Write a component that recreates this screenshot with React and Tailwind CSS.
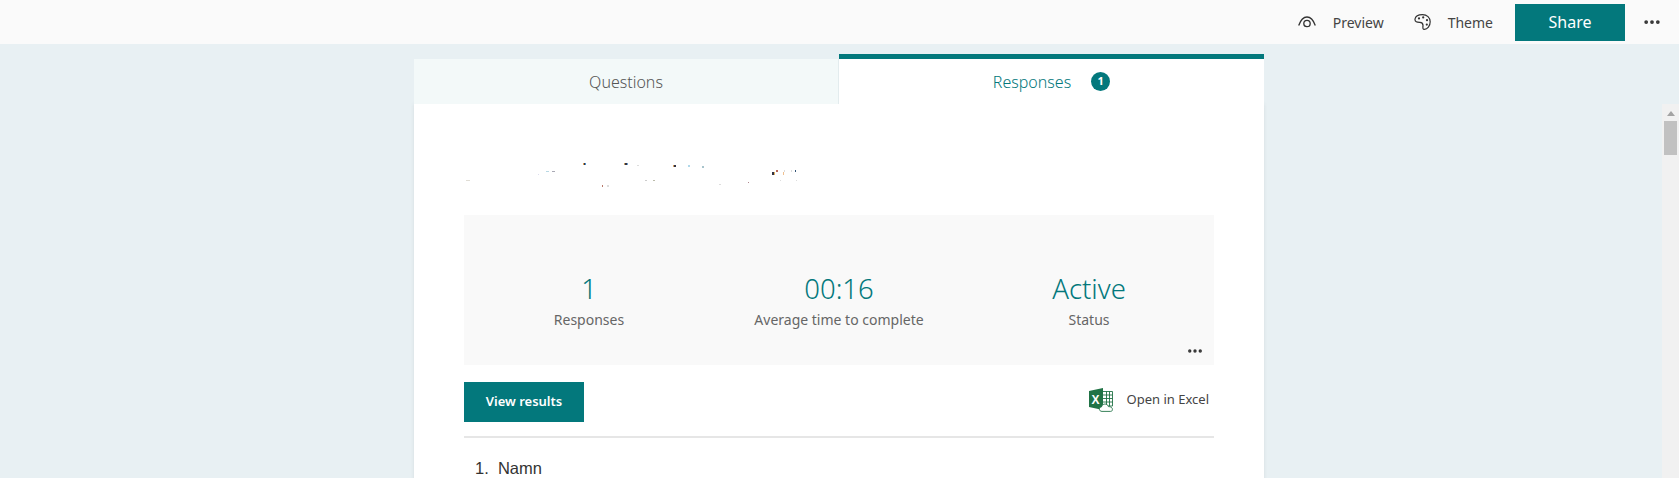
import React from 'react';
import { MoreHorizontal } from 'lucide-react';

const stats = [
  { value: '1', label: 'Responses' },
  { value: '00:16', label: 'Average time to complete' },
  { value: 'Active', label: 'Status' },
];

// x, y, w, h, colour of what is left of the blanked out form title
const specks = [
  [2, 17, 4, 1, '#e0ddd5'],
  [74, 11, 1, 1, '#dde'],
  [82, 8, 3, 1, '#b8d8e4'],
  [88, 8, 3, 1, '#a9a9b4'],
  [119, 0, 1, 2, '#e0a050'],
  [120, 0, 1, 2, '#334'],
  [121, 0, 1, 2, '#4a90d0'],
  [160, 0, 1, 2, '#c9a060'],
  [161, 0, 2, 2, '#334'],
  [163, 0, 1, 2, '#6aa0d0'],
  [173, 2, 2, 1, '#ddd'],
  [138, 22, 1, 2, '#b87868'],
  [143, 22, 2, 2, '#ddd'],
  [181, 17, 2, 1, '#ccc'],
  [189, 17, 2, 1, '#bba'],
  [209, 2, 1, 2, '#d9a060'],
  [210, 2, 2, 2, '#334'],
  [224, 2, 2, 2, '#b0d8ea'],
  [238, 3, 2, 2, '#a8c4cc'],
  [255, 21, 2, 1, '#ddd'],
  [284, 19, 1, 1, '#b08890'],
  [308, 9, 2, 3, '#334'],
  [310, 9, 1, 3, '#e0b060'],
  [312, 7, 2, 2, '#b86858'],
  [319, 9, 1, 3, '#f0c090'],
  [320, 7, 1, 2, '#ddd'],
  [327, 7, 1, 2, '#ddd'],
  [331, 7, 1, 2, '#357'],
  [316, 17, 1, 1, '#ddd'],
  [332, 17, 1, 1, '#ddd'],
];

const EyeIcon = () => (
  <svg width="18" height="12" viewBox="0 0 18 12" fill="none" stroke="#333" strokeWidth="1.3">
    <path d="M0.7 9.5 C3 3 6 1 9 1 C12 1 15 3 17.3 9.5" />
    <circle cx="9" cy="7.5" r="3.2" />
  </svg>
);

const PaletteIcon = () => (
  <svg width="17" height="16" viewBox="0 0 17 16" fill="none" stroke="#333" strokeWidth="1.2">
    <path d="M1 5 C1.5 2 5 0.6 8.5 0.6 C13 0.6 16.2 3.6 16.2 7.8 C16.2 12 13.4 15.4 10.4 15.4 C8.6 15.4 8.8 13.6 9 12.2 C9.2 10 8 8.6 6 8.4 C3.6 8.2 0.6 8.2 1 5 Z" />
    <circle cx="5" cy="4.4" r="1.1" fill="#333" stroke="none" />
    <circle cx="9.2" cy="3.4" r="1.1" fill="#333" stroke="none" />
    <circle cx="13" cy="6.2" r="1.1" fill="#333" stroke="none" />
    <circle cx="12.8" cy="10.6" r="1.1" fill="#333" stroke="none" />
  </svg>
);

const ExcelIcon = () => (
  <svg width="24" height="24" viewBox="0 0 24 24">
    <path d="M0 3 L14 0 V22 L0 19 Z" fill="#217346" />
    <text x="2.5" y="15.5" fill="#fff" fontSize="12" fontWeight="700" fontFamily="Liberation Sans, sans-serif">X</text>
    <path d="M14 3.5 H23.5 V18 H14 M17.5 3.5 V18 M20.5 3.5 V18 M14 7 H23.5 M14 10.5 H23.5 M14 14 H23.5" fill="none" stroke="#217346" strokeWidth="0.9" />
    <path d="M13 23.4 C9.8 23.4 9.5 19.4 12.4 19 C13.4 15.2 18.4 15 19.4 18.6 C22 18.4 23.6 20 23.4 21.6 C23.4 22.8 22.6 23.4 21.6 23.4 Z" fill="#fff" stroke="#217346" strokeWidth="0.9" />
  </svg>
);

export default function App() {
  return (
    <div className="h-[478px] overflow-hidden bg-[#e8f0f3] font-['Noto_Sans',sans-serif] text-[#333]">
      <header className="h-11 bg-[#fafafa] flex items-center justify-end">
        <button className="flex items-center text-[14px] text-[#444] mr-[30px]">
          <EyeIcon />
          <span className="ml-[17px]">Preview</span>
        </button>
        <button className="flex items-center text-[14px] text-[#444] mr-[22px]">
          <PaletteIcon />
          <span className="ml-[17px]">Theme</span>
        </button>
        <button className="w-[110px] h-[37px] bg-[#03787c] text-white text-[16px]">Share</button>
        <div className="w-[54px] flex justify-center">
          <MoreHorizontal size={20} strokeWidth={2.5} className="text-[#333]" />
        </div>
      </header>

      <div className="flex">
        <main className="ml-[414px] mt-[10px] w-[850px]">
          <div className="flex h-[50px]">
            <div className="w-[425px] mt-[5px] bg-[#f3f9f9] border-r border-[#e3ecee] flex items-center justify-center text-[16px] font-light text-[#555]">
              Questions
            </div>
            <div className="w-[425px] bg-white border-t-[5px] border-[#03787c] flex items-center justify-center text-[16px] font-light text-[#03787c]">
              Responses
              <span className="ml-5 w-[19px] h-[19px] rounded-full bg-[#03787c] text-white text-[11px] font-bold flex items-center justify-center">1</span>
            </div>
          </div>

          <div className="bg-white px-[50px] h-[400px] shadow-[0_0_4px_rgba(0,0,0,0.08)]">
            <div className="h-[111px] pt-[59px]">
              <svg width="340" height="30" viewBox="0 0 340 30" className="block">
                {specks.map(([x, y, w, h, fill], i) => (
                  <rect key={i} x={x} y={y} width={w} height={h} fill={fill} />
                ))}
              </svg>
            </div>
            <section className="relative h-[150px] bg-[#f9f9f9] grid grid-cols-3 content-start pt-[57px]">
              {stats.map(s => (
                <div key={s.label} className="text-center">
                  <div className="text-[27.5px] leading-[34px] font-light text-[#03787c]">{s.value}</div>
                  <div className="text-[14px] leading-[20px] mt-[4px] text-[#666]">{s.label}</div>
                </div>
              ))}
              <MoreHorizontal size={18} strokeWidth={2.5} className="absolute right-[10px] bottom-[5px] text-[#333]" />
            </section>
            <div className="flex items-center justify-between mt-[17px] pb-[14px] border-b-2 border-[#e6e6e6]">
              <button className="w-[120px] h-10 bg-[#03787c] text-white text-[13px] font-semibold">View results</button>
              <div className="flex items-center text-[13px] text-[#444] pr-[5px] mb-[5px]">
                <ExcelIcon />
                <span className="ml-[14px]">Open in Excel</span>
              </div>
            </div>
            <div className="mt-[20px] pl-[11px] font-['Liberation_Sans',sans-serif] text-[16.5px] leading-5 text-[#333]">
              1.&nbsp; Namn
            </div>
          </div>
        </main>

        <div className="ml-auto mt-[60px] w-[17px] h-[374px] bg-[#f1f1f1] flex flex-col items-center">
          <div className="mt-[7px] w-0 h-0 border-x-[4px] border-x-transparent border-b-[5px] border-b-[#a3a3a3]" />
          <div className="mt-[5px] w-[13px] h-[34px] bg-[#c1c1c1]" />
        </div>
      </div>
    </div>
  );
}
